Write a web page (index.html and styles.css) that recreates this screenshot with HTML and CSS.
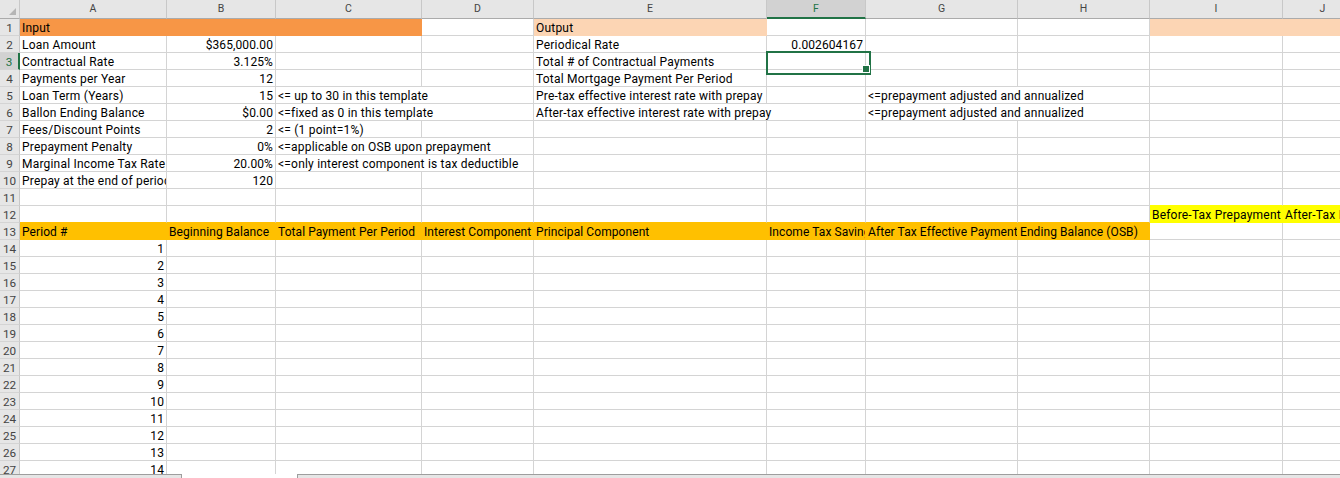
FILE: index.html
```html
<!DOCTYPE html>
<html>
<head>
<meta charset="utf-8">
<title>Mortgage Prepayment Template</title>
<link rel="stylesheet" href="styles.css">
</head>
<body>
<div class="app">
  <div class="sheet">
    <div class="row colhead">
      <div class="corner"><span class="tri"></span></div>
      <div class="ch">A</div><div class="ch">B</div><div class="ch">C</div><div class="ch">D</div><div class="ch">E</div>
      <div class="ch ch-sel">F</div><div class="ch">G</div><div class="ch">H</div><div class="ch">I</div><div class="ch">J</div>
    </div>

    <div class="row">
      <div class="h">1</div>
      <div class="c s3 f-input">Input</div>
      <div class="c"></div>
      <div class="c f-output">Output</div>
      <div class="c"></div><div class="c"></div><div class="c"></div>
      <div class="c s2 f-output"></div>
    </div>

    <div class="row">
      <div class="h">2</div>
      <div class="c">Loan Amount</div>
      <div class="c n">$365,000.00</div>
      <div class="c"></div><div class="c"></div>
      <div class="c">Periodical Rate</div>
      <div class="c n">0.002604167</div>
      <div class="c"></div><div class="c"></div><div class="c"></div><div class="c"></div>
    </div>

    <div class="row">
      <div class="h h-sel">3</div>
      <div class="c">Contractual Rate</div>
      <div class="c n">3.125%</div>
      <div class="c"></div><div class="c"></div>
      <div class="c">Total # of Contractual Payments</div>
      <div class="c sel"><span class="handle"></span></div>
      <div class="c"></div><div class="c"></div><div class="c"></div><div class="c"></div>
    </div>

    <div class="row">
      <div class="h">4</div>
      <div class="c">Payments per Year</div>
      <div class="c n">12</div>
      <div class="c"></div><div class="c"></div>
      <div class="c">Total Mortgage Payment Per Period</div>
      <div class="c"></div><div class="c"></div><div class="c"></div><div class="c"></div><div class="c"></div>
    </div>

    <div class="row">
      <div class="h">5</div>
      <div class="c">Loan Term (Years)</div>
      <div class="c n">15</div>
      <div class="c s2">&lt;= up to 30 in this template</div>
      <div class="c">Pre-tax effective interest rate with prepay</div>
      <div class="c"></div>
      <div class="c s2">&lt;=prepayment adjusted and annualized</div>
      <div class="c"></div><div class="c"></div>
    </div>

    <div class="row">
      <div class="h">6</div>
      <div class="c">Ballon Ending Balance</div>
      <div class="c n">$0.00</div>
      <div class="c s2">&lt;=fixed as 0 in this template</div>
      <div class="c s2">After-tax effective interest rate with prepay</div>
      <div class="c s2">&lt;=prepayment adjusted and annualized</div>
      <div class="c"></div><div class="c"></div>
    </div>

    <div class="row">
      <div class="h">7</div>
      <div class="c">Fees/Discount Points</div>
      <div class="c n">2</div>
      <div class="c">&lt;= (1 point=1%)</div>
      <div class="c"></div><div class="c"></div><div class="c"></div><div class="c"></div><div class="c"></div><div class="c"></div><div class="c"></div>
    </div>

    <div class="row">
      <div class="h">8</div>
      <div class="c">Prepayment Penalty</div>
      <div class="c n">0%</div>
      <div class="c s2">&lt;=applicable on OSB upon prepayment</div>
      <div class="c"></div><div class="c"></div><div class="c"></div><div class="c"></div><div class="c"></div><div class="c"></div>
    </div>

    <div class="row">
      <div class="h">9</div>
      <div class="c">Marginal Income Tax Rate</div>
      <div class="c n">20.00%</div>
      <div class="c s2">&lt;=only interest component is tax deductible</div>
      <div class="c"></div><div class="c"></div><div class="c"></div><div class="c"></div><div class="c"></div><div class="c"></div>
    </div>

    <div class="row">
      <div class="h">10</div>
      <div class="c">Prepay at the end of period</div>
      <div class="c n">120</div>
      <div class="c"></div><div class="c"></div><div class="c"></div><div class="c"></div><div class="c"></div><div class="c"></div><div class="c"></div><div class="c"></div>
    </div>

    <div class="row">
      <div class="h">11</div>
      <div class="c"></div><div class="c"></div><div class="c"></div><div class="c"></div><div class="c"></div><div class="c"></div><div class="c"></div><div class="c"></div>
      <div class="c b-yellow"></div><div class="c b-yellow"></div>
    </div>

    <div class="row">
      <div class="h">12</div>
      <div class="c b-gold"></div><div class="c b-gold"></div><div class="c b-gold"></div><div class="c b-gold"></div><div class="c b-gold"></div><div class="c b-gold"></div><div class="c b-gold"></div><div class="c b-gold"></div>
      <div class="c f-yellow">Before-Tax Prepayment APR</div>
      <div class="c f-yellow">After-Tax Effective APR</div>
    </div>

    <div class="row">
      <div class="h">13</div>
      <div class="c f-gold">Period #</div>
      <div class="c f-gold">Beginning Balance</div>
      <div class="c f-gold">Total Payment Per Period</div>
      <div class="c f-gold">Interest Component</div>
      <div class="c f-gold">Principal Component</div>
      <div class="c f-gold">Income Tax Saving</div>
      <div class="c f-gold">After Tax Effective Payment</div>
      <div class="c f-gold">Ending Balance (OSB)</div>
      <div class="c"></div><div class="c"></div>
    </div>

    <div class="row"><div class="h">14</div><div class="c n">1</div><div class="c"></div><div class="c"></div><div class="c"></div><div class="c"></div><div class="c"></div><div class="c"></div><div class="c"></div><div class="c"></div><div class="c"></div></div>
    <div class="row"><div class="h">15</div><div class="c n">2</div><div class="c"></div><div class="c"></div><div class="c"></div><div class="c"></div><div class="c"></div><div class="c"></div><div class="c"></div><div class="c"></div><div class="c"></div></div>
    <div class="row"><div class="h">16</div><div class="c n">3</div><div class="c"></div><div class="c"></div><div class="c"></div><div class="c"></div><div class="c"></div><div class="c"></div><div class="c"></div><div class="c"></div><div class="c"></div></div>
    <div class="row"><div class="h">17</div><div class="c n">4</div><div class="c"></div><div class="c"></div><div class="c"></div><div class="c"></div><div class="c"></div><div class="c"></div><div class="c"></div><div class="c"></div><div class="c"></div></div>
    <div class="row"><div class="h">18</div><div class="c n">5</div><div class="c"></div><div class="c"></div><div class="c"></div><div class="c"></div><div class="c"></div><div class="c"></div><div class="c"></div><div class="c"></div><div class="c"></div></div>
    <div class="row"><div class="h">19</div><div class="c n">6</div><div class="c"></div><div class="c"></div><div class="c"></div><div class="c"></div><div class="c"></div><div class="c"></div><div class="c"></div><div class="c"></div><div class="c"></div></div>
    <div class="row"><div class="h">20</div><div class="c n">7</div><div class="c"></div><div class="c"></div><div class="c"></div><div class="c"></div><div class="c"></div><div class="c"></div><div class="c"></div><div class="c"></div><div class="c"></div></div>
    <div class="row"><div class="h">21</div><div class="c n">8</div><div class="c"></div><div class="c"></div><div class="c"></div><div class="c"></div><div class="c"></div><div class="c"></div><div class="c"></div><div class="c"></div><div class="c"></div></div>
    <div class="row"><div class="h">22</div><div class="c n">9</div><div class="c"></div><div class="c"></div><div class="c"></div><div class="c"></div><div class="c"></div><div class="c"></div><div class="c"></div><div class="c"></div><div class="c"></div></div>
    <div class="row"><div class="h">23</div><div class="c n">10</div><div class="c"></div><div class="c"></div><div class="c"></div><div class="c"></div><div class="c"></div><div class="c"></div><div class="c"></div><div class="c"></div><div class="c"></div></div>
    <div class="row"><div class="h">24</div><div class="c n">11</div><div class="c"></div><div class="c"></div><div class="c"></div><div class="c"></div><div class="c"></div><div class="c"></div><div class="c"></div><div class="c"></div><div class="c"></div></div>
    <div class="row"><div class="h">25</div><div class="c n">12</div><div class="c"></div><div class="c"></div><div class="c"></div><div class="c"></div><div class="c"></div><div class="c"></div><div class="c"></div><div class="c"></div><div class="c"></div></div>
    <div class="row"><div class="h">26</div><div class="c n">13</div><div class="c"></div><div class="c"></div><div class="c"></div><div class="c"></div><div class="c"></div><div class="c"></div><div class="c"></div><div class="c"></div><div class="c"></div></div>
    <div class="row"><div class="h">27</div><div class="c n">14</div><div class="c"></div><div class="c"></div><div class="c"></div><div class="c"></div><div class="c"></div><div class="c"></div><div class="c"></div><div class="c"></div><div class="c"></div></div>
  </div>
  <div class="bottombar">
    <div class="tabs"></div>
    <div class="gap"></div>
    <div class="scroll"></div>
  </div>
</div>
</body>
</html>
```

FILE: styles.css
```css
* {
  box-sizing: border-box;
  margin: 0;
  padding: 0;
}

html, body {
  width: 1340px;
  height: 478px;
  overflow: hidden;
  background: #ffffff;
}

body {
  font-family: Roboto, "Liberation Sans", sans-serif;
  font-size: 12px;
  letter-spacing: 0.2px;
  color: #000000;
}

.app {
  display: flex;
  flex-direction: column;
  height: 478px;
}

.sheet {
  flex: 1;
  overflow: hidden;
}

.row {
  display: grid;
  grid-template-columns: 20px 147px 109px 146px 112px 233px 99px 152px 132px 133px 80px;
  height: 17px;
}

.colhead {
  height: 19px;
}

.corner {
  background: #e6e6e6;
  border-right: 1px solid #c8c8c8;
  border-bottom: 1px solid #ababab;
  display: flex;
  justify-content: flex-end;
  align-items: flex-end;
  padding: 0 3px 3px 0;
}

.tri {
  width: 0;
  height: 0;
  border-left: 7px solid transparent;
  border-bottom: 7px solid #b5b5b5;
}

.ch {
  background: #e6e6e6;
  border-right: 1px solid #c8c8c8;
  border-bottom: 1px solid #ababab;
  text-align: center;
  color: #444444;
  font-size: 10.5px;
  letter-spacing: 0;
  line-height: 18px;
}

.ch-sel {
  background: #d2d2d2;
  color: #217346;
  border-bottom: 2px solid #217346;
  line-height: 17px;
}

.h {
  background: #e6e6e6;
  border-right: 1px solid #c8c8c8;
  border-bottom: 1px solid #d4d4d4;
  color: #444444;
  text-align: center;
  font-size: 11.7px;
  letter-spacing: 0;
  line-height: 16px;
  padding-top: 1px;
  overflow: hidden;
}

.h-sel {
  background: #d2d2d2;
  border-right: 2px solid #217346;
  color: #217346;
}

.c {
  border-right: 1px solid #d4d4d4;
  border-bottom: 1px solid #d4d4d4;
  white-space: nowrap;
  overflow: hidden;
  line-height: 16px;
  padding: 1px 2px 0 2px;
  height: 17px;
}

.n {
  text-align: right;
  letter-spacing: 0.1px;
}

.s2 {
  grid-column: span 2;
}

.s3 {
  grid-column: span 3;
}

.f-input {
  background: #f79646;
  border-color: #f79646;
}

.f-output {
  background: #fcd5b4;
  border-color: #fcd5b4;
}

.f-gold {
  background: #ffc000;
  border-color: #ffc000;
  letter-spacing: 0.08px;
}

.f-yellow {
  background: #ffff00;
  border-color: #ffff00;
}

.b-gold {
  border-bottom-color: #ffc000;
}

.b-yellow {
  border-bottom-color: #ffff00;
}

.sel {
  position: relative;
  overflow: visible;
  z-index: 2;
}

.sel::before {
  content: "";
  position: absolute;
  left: -1px;
  top: -2px;
  width: 101px;
  height: 20px;
  border: 2px solid #217346;
}

.handle {
  position: absolute;
  right: -4px;
  bottom: -3px;
  width: 6px;
  height: 6px;
  background: #217346;
  outline: 1px solid #ffffff;
}

.bottombar {
  height: 4px;
  display: flex;
}

.tabs {
  width: 182px;
  background: #e6e6e6;
  border-top: 1px solid #9e9e9e;
  border-right: 1px solid #9e9e9e;
}

.gap {
  width: 115px;
  background: #ffffff;
}

.scroll {
  flex: 1;
  background: #e6e6e6;
  border-top: 1px solid #9e9e9e;
  border-left: 1px solid #9e9e9e;
}
```
